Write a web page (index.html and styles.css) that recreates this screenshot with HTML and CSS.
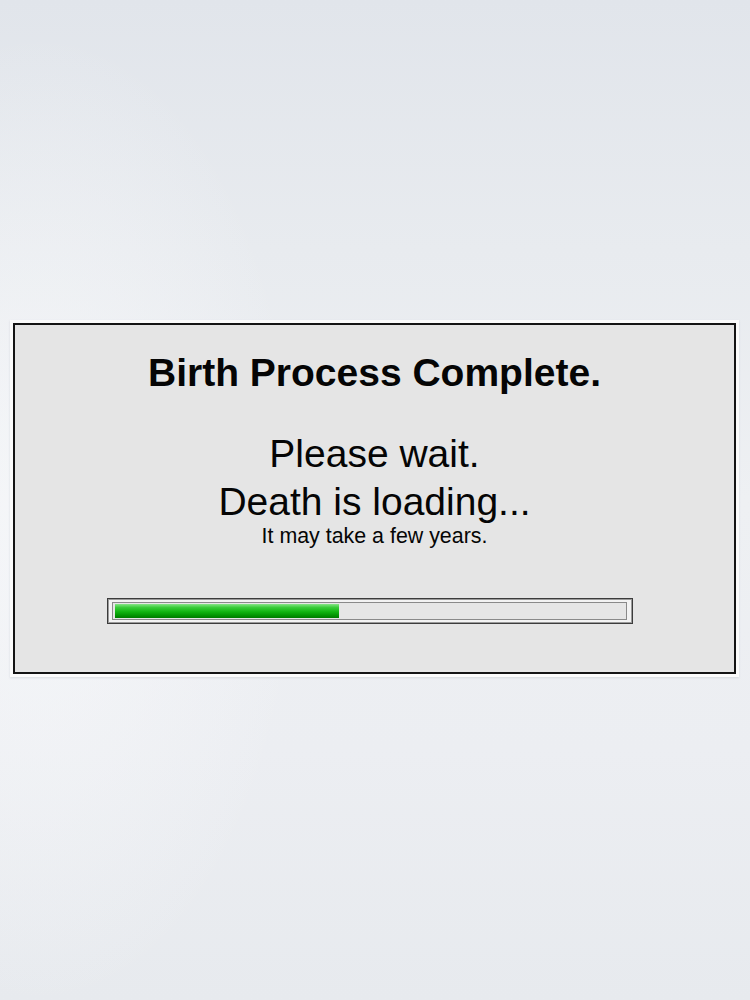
FILE: index.html
```html
<!DOCTYPE html>
<html>
<head>
<meta charset="utf-8">
<link rel="stylesheet" href="styles.css">
</head>
<body>
<main class="wall">
  <div class="paper">
    <section class="dialog">
      <h1 class="title">Birth Process Complete.</h1>
      <p class="message">Please wait.<br>Death is loading...</p>
      <p class="note">It may take a few years.</p>
      <div class="progress">
        <div class="track">
          <div class="fill" style="width: 44%"></div>
        </div>
      </div>
    </section>
  </div>
</main>
</body>
</html>
```

FILE: styles.css
```css
html, body {
  margin: 0;
  padding: 0;
}

body {
  width: 750px;
  height: 1000px;
  overflow: hidden;
  font-family: "Liberation Sans", Arial, sans-serif;
  color: #050505;
}

.wall {
  box-sizing: border-box;
  width: 750px;
  height: 1000px;
  padding: 320px 0 0 10px;
  background:
    radial-gradient(ellipse 380px 700px at 40px 520px, rgba(248, 249, 251, 0.7), rgba(248, 249, 251, 0) 70%),
    linear-gradient(to bottom, #e1e5eb 0%, #e8ebef 25%, #eef0f3 50%, #eceef2 75%, #e7eaee 100%);
}

.paper {
  box-sizing: border-box;
  width: 729px;
  height: 357px;
  padding: 3px;
  background: #fbfbfb;
  box-shadow: 0 1px 2px rgba(120, 130, 145, 0.2);
}

.dialog {
  box-sizing: border-box;
  width: 723px;
  height: 351px;
  border: 2px solid #141414;
  background: #e5e5e5;
  padding: 24px 0 0 0;
  display: flex;
  flex-direction: column;
  text-align: center;
}

.title {
  margin: 0;
  font-size: 39px;
  line-height: 48px;
  font-weight: bold;
}

.message {
  margin: 33px 0 0 0;
  font-size: 39px;
  line-height: 48px;
  font-weight: normal;
}

.note {
  margin: 0;
  font-size: 21.4px;
  line-height: 21px;
}

.progress {
  box-sizing: border-box;
  margin: 51px 0 0 92px;
  width: 526px;
  height: 26px;
  border: 1px solid #3c3c3c;
  box-shadow: inset 1px 1px 0 #9a9a9a, inset -1px -1px 0 #9a9a9a;
  background: #f3f3f3;
  padding: 3px 5px 3px 4px;
}

.track {
  box-sizing: border-box;
  height: 18px;
  border: 1px solid #8a8a8a;
  background: #e6e6e6;
  padding: 1px 2px;
}

.fill {
  height: 14px;
  background: linear-gradient(to bottom, #86e586 0%, #3acb3a 25%, #11b511 55%, #009000 85%, #007a00 100%);
}
```
